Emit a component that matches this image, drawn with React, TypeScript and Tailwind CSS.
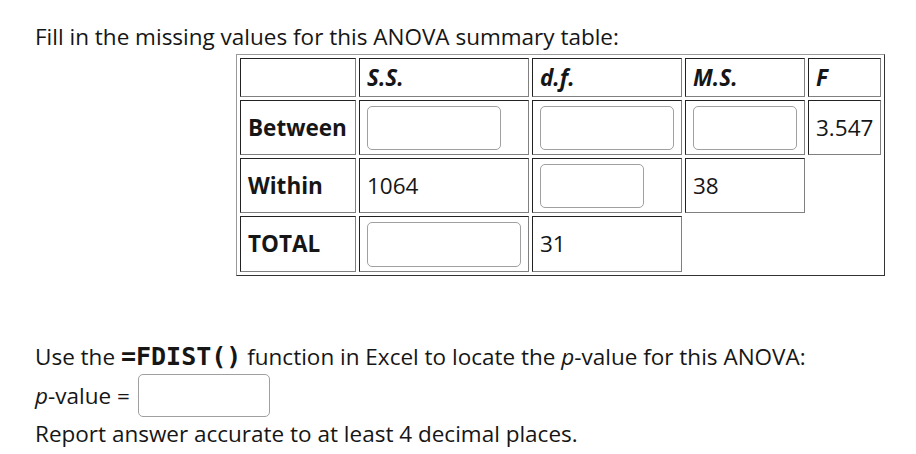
import React from 'react';

const cell =
  'border border-t-[#222] border-l-[#222] border-r-[#808080] border-b-[#808080] px-[7px] py-0 align-middle text-left';

function Box({ w, h = 44 }: { w: number; h?: number }) {
  return (
    <input
      type="text"
      readOnly
      style={{ width: w, height: h }}
      className="rounded-[5px] border border-[#a0a0a0] bg-white block"
    />
  );
}

export default function App() {
  return (
    <div
      className="min-h-screen bg-white pl-[35px] pt-[18px] text-[22.5px] text-[#161616]"
      style={{ fontFamily: '"Open Sans", "Noto Sans", sans-serif' }}
    >
      <p className="leading-[37px]">Fill in the missing values for this ANOVA summary table:</p>

      <table className="ml-[201px] -mt-[1px] border-separate border-spacing-[3px] border border-t-[#999] border-l-[#999] border-r-[#333] border-b-[#333] leading-[30px]">
        <tbody>
          <tr className="h-[39px]">
            <th className={`${cell} w-[116px]`}></th>
            <th className={`${cell} italic font-bold`}>S.S.</th>
            <th className={`${cell} italic font-bold`}>d.f.</th>
            <th className={`${cell} italic font-bold`}>M.S.</th>
            <th className={`${cell} italic font-bold`}>F</th>
          </tr>
          <tr className="h-[55px]">
            <td className={`${cell} font-bold`}>Between</td>
            <td className={cell}><Box w={134} /></td>
            <td className={cell}><Box w={134} /></td>
            <td className={cell}><Box w={104} /></td>
            <td className={cell}>3.547</td>
          </tr>
          <tr className="h-[55px]">
            <td className={`${cell} font-bold`}>Within</td>
            <td className={cell}>1064</td>
            <td className={cell}><Box w={104} /></td>
            <td className={cell}>38</td>
          </tr>
          <tr className="h-[56px]">
            <td className={`${cell} font-bold`}>TOTAL</td>
            <td className={cell}><Box w={154} h={45} /></td>
            <td className={cell}>31</td>
          </tr>
        </tbody>
      </table>

      <div className="mt-[62px] leading-[38px]">
        <p>
          Use the{' '}
          <span
            className="font-bold text-[25px] leading-[20px]"
            style={{ fontFamily: '"DejaVu Sans Mono", monospace' }}
          >
            =FDIST()
          </span>{' '}
          function in Excel to locate the <i>p</i>-value for this ANOVA:
        </p>
        <div className="flex items-center gap-[8px] h-[39px]">
          <span>
            <i>p</i>-value =
          </span>
          <Box w={132} h={43} />
        </div>
        <p>Report answer accurate to at least 4 decimal places.</p>
      </div>
    </div>
  );
}
